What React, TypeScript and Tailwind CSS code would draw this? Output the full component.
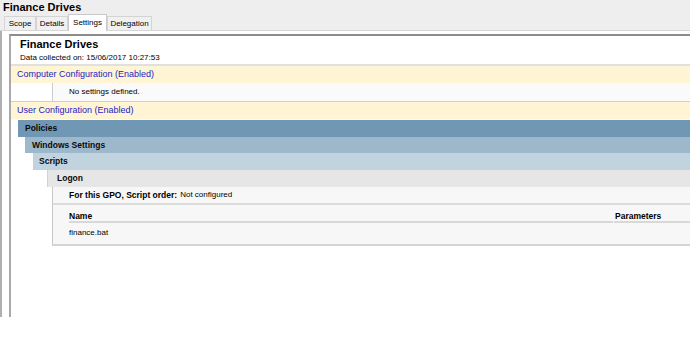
import React from "react";

const font = { fontFamily: '"Liberation Sans", Arial, sans-serif' };

function Tab({ label, w, selected }: { label: string; w: string; selected?: boolean }) {
  return selected ? (
    <div className={`${w} h-[17px] bg-white border border-b-0 border-[#c9c9c9] flex items-center justify-center text-[8px] text-black relative top-[1px]`}>
      {label}
    </div>
  ) : (
    <div className={`${w} h-[14px] bg-[#f0f0f0] border border-b-0 border-[#d4d4d4] flex items-center justify-center text-[8px] text-black`}>
      {label}
    </div>
  );
}

export default function App() {
  return (
    <div className="w-[690px] h-[339px] bg-white overflow-hidden text-black" style={font}>
      <div className="h-[15px] bg-[#eeeeee] pl-[3px] text-[11px] font-bold leading-[15px]">Finance Drives</div>
      <div className="h-[16px] bg-[#eeeeee] flex items-end pl-[4px] border-b border-[#d6d6d6]">
        <Tab label="Scope" w="w-[32px]" />
        <Tab label="Details" w="w-[32px]" />
        <Tab label="Settings" w="w-[39px]" selected />
        <Tab label="Delegation" w="w-[45px]" />
      </div>
      <div className="flex h-[286px]">
        <div className="w-[2px] bg-[#b0b0b0]" />
        <div className="w-[7px] bg-white" />
        <div className="flex-1 pt-[3px] bg-white">
          <div className="h-full border-l-2 border-t-2 border-l-[#a9a9a9] border-t-[#8c8c8c] overflow-hidden">
            <div className="h-[30px] pt-[1px] pl-[9px] border-b-2 border-[#e0e0e0]">
              <div className="h-[15px] leading-[15px] text-[11px] font-bold">Finance Drives</div>
              <div className="h-[12px] leading-[12px] text-[8px]">Data collected on: 15/06/2017 10:27:53</div>
            </div>
            <div className="h-[17px] bg-[#fff5d5] flex items-center pl-[6px] text-[9px] text-[#1c1cc4]">
              Computer Configuration (Enabled)
            </div>
            <div className="ml-[41px] h-[18px] border-l border-[#cccccc] bg-[#fafafa] flex items-center pl-[16px] text-[8px]">
              No settings defined.
            </div>
            <div className="h-[1px] bg-[#d0d0d0]" />
            <div className="h-[18px] bg-[#fff5d5] border-b border-[#fffbe9] flex items-center pl-[6px] text-[9px] text-[#1c1cc4]">
              User Configuration (Enabled)
            </div>
            <div className="ml-[7px] h-[17px] bg-[#7097b3] flex items-center pl-[7px] text-[8.5px] font-bold text-[#0a0a0a]">
              Policies
            </div>
            <div className="ml-[14px] h-[16px] bg-[#9db8ca] flex items-center pl-[7px] text-[8.5px] font-bold text-[#0a0a0a]">
              Windows Settings
            </div>
            <div className="ml-[22px] h-[17px] bg-[#c0d3df] flex items-center pl-[6px] text-[8.5px] font-bold text-[#0a0a0a]">
              Scripts
            </div>
            <div className="ml-[36px] h-[17px] bg-[#e6e6e6] border-l border-[#d2d2d2] flex items-center pl-[9px] text-[8.5px] font-bold text-[#0a0a0a]">
              Logon
            </div>
            <div className="ml-[41px] bg-[#f7f7f7] border-l border-[#c8c8c8] border-b-2 border-b-[#d4d4d4]">
              <div className="h-[16px] flex items-center pl-[16px] text-[8px]">
                <span className="font-bold text-[8.5px]">For this GPO, Script order:</span>
                <span className="ml-[3px]">Not configured</span>
              </div>
              <div className="h-[2px] bg-[#dcdcdc]" />
              <div className="pl-[16px]">
                <div className="flex h-[18px]">
                  <div className="w-[544px] border-b-2 border-[#d8d8d8] pt-[5px] text-[8.5px] font-bold">Name</div>
                  <div className="w-[1px]" />
                  <div className="flex-1 border-b-2 border-[#d8d8d8] pt-[5px] pl-[1px] text-[8.5px] font-bold">Parameters</div>
                </div>
                <div className="h-[21px] pt-[4px] text-[8px]">finance.bat</div>
              </div>
            </div>
          </div>
        </div>
      </div>
    </div>
  );
}
